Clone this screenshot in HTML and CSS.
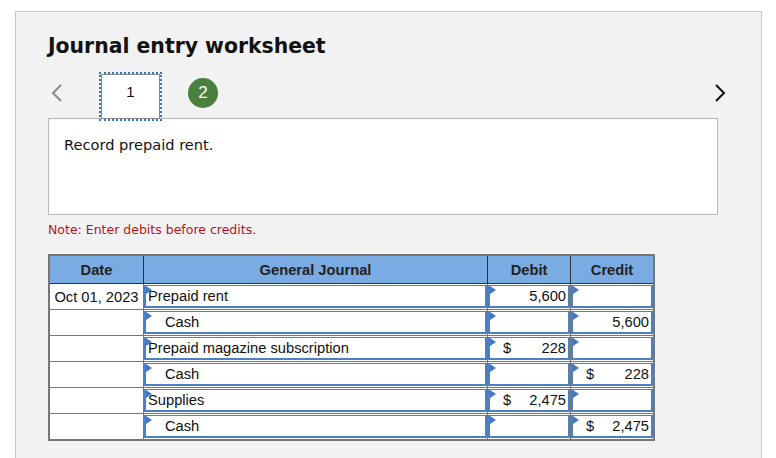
FILE: index.html
```html
<!DOCTYPE html>
<html lang="en">
<head>
    <meta charset="UTF-8">
    <title>Journal entry worksheet</title>
    <link rel="stylesheet" href="styles.css">
</head>
<body>

<div class="panel">
    <h1 class="title">Journal entry worksheet</h1>

    <div class="nav">
        <span class="arrow prev">
            <svg width="12" height="18" viewBox="0 0 12 18"><path d="M10 1 L2 9 L10 17" fill="none" stroke="#8a8a8a" stroke-width="2"/></svg>
        </span>
        <div class="tab active">1</div>
        <div class="tab done">2</div>
        <span class="arrow next">
            <svg width="12" height="18" viewBox="0 0 12 18"><path d="M2 1 L10 9 L2 17" fill="none" stroke="#111" stroke-width="2"/></svg>
        </span>
    </div>

    <div class="prompt">Record prepaid rent.</div>

    <p class="note">Note: Enter debits before credits.</p>

    <table class="journal">
        <thead>
            <tr>
                <th class="col-date">Date</th>
                <th class="col-acct">General Journal</th>
                <th class="col-num">Debit</th>
                <th class="col-num">Credit</th>
            </tr>
        </thead>
        <tbody>
            <tr>
                <td class="date">Oct 01, 2023</td>
                <td><div class="field">Prepaid rent</div></td>
                <td><div class="field num"><span></span>5,600</div></td>
                <td><div class="field num"></div></td>
            </tr>
            <tr>
                <td class="date"></td>
                <td><div class="field indent">Cash</div></td>
                <td><div class="field num"></div></td>
                <td><div class="field num"><span></span>5,600</div></td>
            </tr>
            <tr>
                <td class="date"></td>
                <td><div class="field">Prepaid magazine subscription</div></td>
                <td><div class="field num"><span>$</span>228</div></td>
                <td><div class="field num"></div></td>
            </tr>
            <tr>
                <td class="date"></td>
                <td><div class="field indent">Cash</div></td>
                <td><div class="field num"></div></td>
                <td><div class="field num"><span>$</span>228</div></td>
            </tr>
            <tr>
                <td class="date"></td>
                <td><div class="field">Supplies</div></td>
                <td><div class="field num"><span>$</span>2,475</div></td>
                <td><div class="field num"></div></td>
            </tr>
            <tr>
                <td class="date"></td>
                <td><div class="field indent">Cash</div></td>
                <td><div class="field num"></div></td>
                <td><div class="field num"><span>$</span>2,475</div></td>
            </tr>
        </tbody>
    </table>
</div>

</body>
</html>
```

FILE: styles.css
```css
body {
    margin: 0;
    background: #fff;
    font-family: "DejaVu Sans", Verdana, sans-serif;
    color: #111;
}
.panel {
    margin: 11px 0 0 15px;
    width: 713px;
    height: 460px;
    padding: 0 0 0 32px;
    background: #f2f2f2;
    border: 1px solid #c8c8c8;
    border-bottom: none;
}
.title {
    margin: 0;
    padding-top: 22px;
    font-size: 20.4px;
    line-height: 24px;
    font-weight: bold;
}
.nav {
    display: flex;
    align-items: center;
    height: 46px;
    margin-top: 15px;
    position: relative;
}
.arrow {
    display: flex;
    margin-bottom: 6px;
}
.prev {
    margin-left: 3px;
}
.next {
    margin-left: auto;
    margin-right: 35px;
}
.tab {
    font-family: "Liberation Sans", Arial, sans-serif;
    font-size: 15px;
}
.tab.active {
    margin-left: 38px;
    width: 59px;
    height: 45px;
    background: #fff;
    border: 1px solid #888;
    outline: 2px dotted #3a76c0;
    outline-offset: 0;
    display: flex;
    justify-content: center;
    padding-top: 8px;
    box-sizing: border-box;
    align-self: flex-end;
    position: relative;
    z-index: 1;
    color: #111;
}
.tab.done {
    margin-left: 28px;
    margin-bottom: 6px;
    width: 30px;
    height: 30px;
    border-radius: 50%;
    background: #4b7f3e;
    color: #fff;
    display: flex;
    align-items: center;
    justify-content: center;
    font-size: 17px;
}
.prompt {
    width: 653px;
    height: 79px;
    margin-top: -1px;
    padding: 16px 0 0 15px;
    background: #fff;
    border: 1px solid #b8b8b8;
    font-size: 14.6px;
    line-height: 20px;
}
.note {
    margin: 7px 0 0;
    font-size: 12.5px;
    line-height: 16px;
    color: #b8121b;
}
.journal {
    margin-top: 16px;
    border-collapse: collapse;
    font-family: "Liberation Sans", Arial, sans-serif;
    font-size: 14.7px;
    border: 2px solid #777;
}
.journal th {
    background: #7aabe3;
    color: #222;
    font-weight: bold;
    height: 27px;
    padding: 0;
    border: 1px solid #333;
    border-top: none;
}
.col-date {
    width: 93px;
}
.col-acct {
    width: 343px;
}
.col-num {
    width: 82px;
}
.journal td {
    height: 25px;
    padding: 0;
    border: 1px solid #777;
    background: #fff;
}
.journal td.date {
    text-align: center;
    color: #111;
}
.field {
    position: relative;
    height: 20px;
    line-height: 20px;
    border: 2px solid #4c7fc4;
    border-top-width: 1px;
    background: #fff;
    padding: 0 2px;
    white-space: nowrap;
    color: #111;
}
.field::before {
    content: "";
    position: absolute;
    left: 0;
    top: 0;
    border-top: 4px solid transparent;
    border-bottom: 4px solid transparent;
    border-left: 6px solid #3f78c6;
}
.field.indent {
    padding-left: 19px;
}
.field.num {
    display: flex;
    justify-content: space-between;
    padding: 0 2px 0 13px;
}
```
